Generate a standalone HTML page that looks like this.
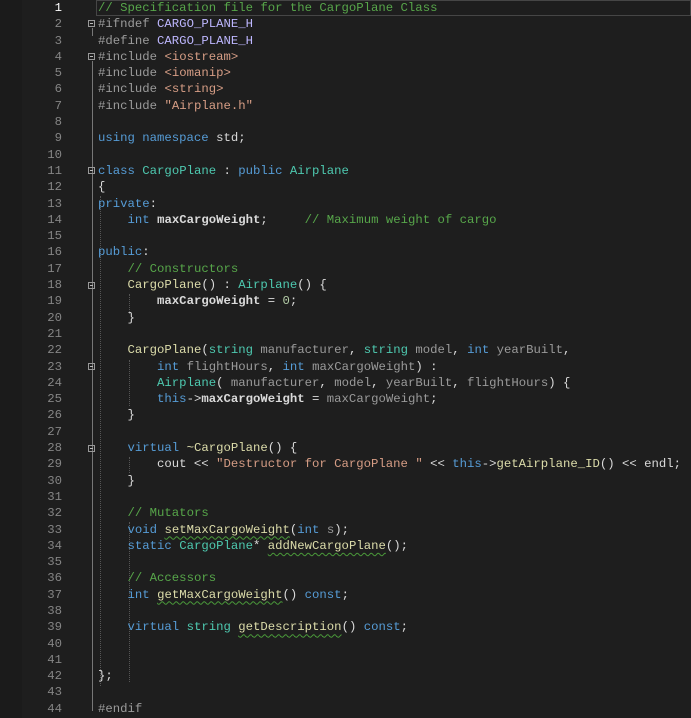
<!DOCTYPE html><html><head><style>
body{margin:0;width:691px;height:718px;background:#1e1e1e;overflow:hidden;position:relative;font-family:"Liberation Mono",monospace;font-size:12.3px}
.ln{position:absolute;left:0;top:0;width:62px;text-align:right;color:#858585;white-space:pre;margin:0;font:inherit;line-height:16.3px}
pre{position:absolute;left:98px;top:0;margin:0;color:#dadada;font:inherit;line-height:16.3px}
.k{color:#569cd6}.t{color:#4ec9b0}.s{color:#d69d85}.c{color:#57a64a}.p{color:#9b9b9b}.m{color:#beb7ff}.f{color:#dcdcaa}.a{color:#9a9a9a}.w{color:#dadada;font-weight:bold}
.q{text-decoration:underline wavy #4a9a3a;text-decoration-thickness:1px;text-underline-offset:3px}
.fold{position:absolute;left:88px;width:7px;height:7px;border:1px solid #999;box-sizing:border-box}
.fold:after{content:"";position:absolute;left:1px;top:2px;width:3px;height:1px;background:#bbb}
.vl{position:absolute;left:92px;width:1px;background:#777}
.gd{position:absolute;border-left:1px dotted #555}
</style></head><body>
<div style="position:absolute;left:0;top:0;width:22px;height:718px;background:#1b1b1b"></div>
<div style="position:absolute;left:96px;top:0;width:595px;height:16px;border:1px solid #464646;box-sizing:border-box"></div>
<pre class="ln"><span style="color:#fff">1</span>
2
3
4
5
6
7
8
9
10
11
12
13
14
15
16
17
18
19
20
21
22
23
24
25
26
27
28
29
30
31
32
33
34
35
36
37
38
39
40
41
42
43
44</pre>
<div class="fold" style="top:20px"></div><div class="vl" style="top:28px;height:8px"></div>
<div class="fold" style="top:53px"></div><div class="vl" style="top:61px;height:650px"></div>
<div class="fold" style="top:167px"></div>
<div class="fold" style="top:282px"></div>
<div class="fold" style="top:363px"></div>
<div class="fold" style="top:445px"></div>
<div class="gd" style="left:100px;top:196px;height:490px"></div>
<div class="gd" style="left:129px;top:294px;height:20px"></div>
<div class="gd" style="left:129px;top:360px;height:46px"></div>
<div class="gd" style="left:129px;top:457px;height:16px"></div>
<div class="gd" style="left:129px;top:522px;height:160px"></div>
<pre><span class="c">// Specification file for the CargoPlane Class</span>
<span class="p">#ifndef</span> <span class="m">CARGO_PLANE_H</span>
<span class="p">#define</span> <span class="m">CARGO_PLANE_H</span>
<span class="p">#include</span> <span class="s">&lt;iostream&gt;</span>
<span class="p">#include</span> <span class="s">&lt;iomanip&gt;</span>
<span class="p">#include</span> <span class="s">&lt;string&gt;</span>
<span class="p">#include</span> <span class="s">"Airplane.h"</span>

<span class="k">using namespace</span> std;

<span class="k">class</span> <span class="t">CargoPlane</span> : <span class="k">public</span> <span class="t">Airplane</span>
{
<span class="k">private</span>:
    <span class="k">int</span> <span class="w">maxCargoWeight</span>;     <span class="c">// Maximum weight of cargo</span>

<span class="k">public</span>:
    <span class="c">// Constructors</span>
    <span class="f">CargoPlane</span>() : <span class="t">Airplane</span>() {
        <span class="w">maxCargoWeight</span> = <span style="color:#b5cea8">0</span>;
    }

    <span class="f">CargoPlane</span>(<span class="t">string</span> <span class="a">manufacturer</span>, <span class="t">string</span> <span class="a">model</span>, <span class="k">int</span> <span class="a">yearBuilt</span>,
        <span class="k">int</span> <span class="a">flightHours</span>, <span class="k">int</span> <span class="a">maxCargoWeight</span>) :
        <span class="t">Airplane</span>( <span class="a">manufacturer</span>, <span class="a">model</span>, <span class="a">yearBuilt</span>, <span class="a">flightHours</span>) {
        <span class="k">this</span>-&gt;<span class="w">maxCargoWeight</span> = <span class="a">maxCargoWeight</span>;
    }

    <span class="k">virtual</span> <span class="f">~CargoPlane</span>() {
        cout &lt;&lt; <span class="s">"Destructor for CargoPlane "</span> &lt;&lt; <span class="k">this</span>-&gt;<span class="f">getAirplane_ID</span>() &lt;&lt; endl;
    }

    <span class="c">// Mutators</span>
    <span class="k">void</span> <span class="f q">setMaxCargoWeight</span>(<span class="k">int</span> <span class="a">s</span>);
    <span class="k">static</span> <span class="t">CargoPlane</span>* <span class="f q">addNewCargoPlane</span>();

    <span class="c">// Accessors</span>
    <span class="k">int</span> <span class="f q">getMaxCargoWeight</span>() <span class="k">const</span>;

    <span class="k">virtual</span> <span class="t">string</span> <span class="f q">getDescription</span>() <span class="k">const</span>;


};

<span class="p">#endif</span></pre>
</body></html>
